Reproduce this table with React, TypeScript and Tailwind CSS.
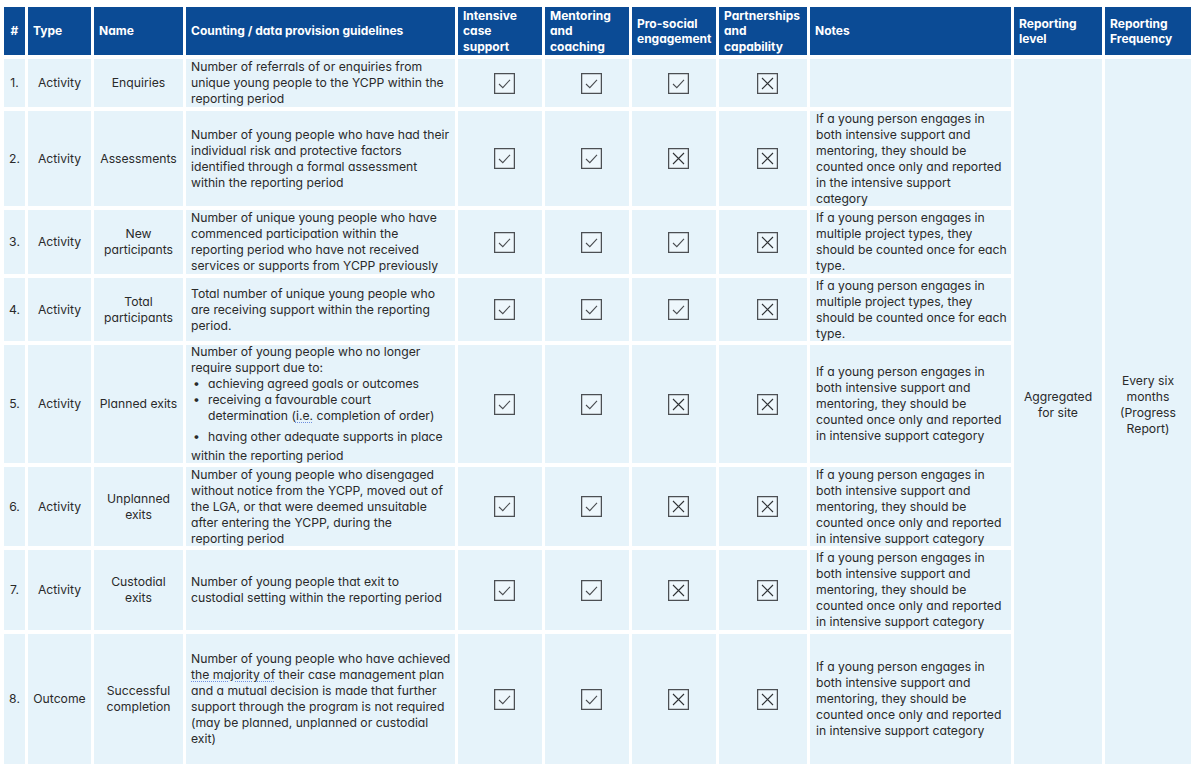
import React from "react";

type Row = {
  type: string;
  name: string[];
  guide: React.ReactNode;
  checks: boolean[];
  notes: string[];
};

const notesBoth = [
  "If a young person engages in",
  "both intensive support and",
  "mentoring, they should be",
  "counted once only and reported",
  "in intensive support category",
];

const notesMulti = [
  "If a young person engages in",
  "multiple project types, they",
  "should be counted once for each",
  "type.",
];

function Lines({ lines }: { lines: React.ReactNode[] }) {
  return (
    <>
      {lines.map((l, i) => (
        <React.Fragment key={i}>
          {i > 0 && <br />}
          {l}
        </React.Fragment>
      ))}
    </>
  );
}

const dotted = "underline decoration-dotted decoration-[#6f8fe0] underline-offset-2";

const rows: Row[] = [
  {
    type: "Activity",
    name: ["Enquiries"],
    guide: (
      <Lines
        lines={[
          "Number of referrals of or enquiries from",
          "unique young people to the YCPP within the",
          "reporting period",
        ]}
      />
    ),
    checks: [true, true, true, false],
    notes: [],
  },
  {
    type: "Activity",
    name: ["Assessments"],
    guide: (
      <Lines
        lines={[
          "Number of young people who have had their",
          "individual risk and protective factors",
          "identified through a formal assessment",
          "within the reporting period",
        ]}
      />
    ),
    checks: [true, true, false, false],
    notes: [
      "If a young person engages in",
      "both intensive support and",
      "mentoring, they should be",
      "counted once only and reported",
      "in the intensive support",
      "category",
    ],
  },
  {
    type: "Activity",
    name: ["New", "participants"],
    guide: (
      <Lines
        lines={[
          "Number of unique young people who have",
          "commenced participation within the",
          "reporting period who have not received",
          "services or supports from YCPP previously",
        ]}
      />
    ),
    checks: [true, true, true, false],
    notes: notesMulti,
  },
  {
    type: "Activity",
    name: ["Total", "participants"],
    guide: (
      <Lines
        lines={[
          "Total number of unique young people who",
          "are receiving support within the reporting",
          "period.",
        ]}
      />
    ),
    checks: [true, true, true, false],
    notes: notesMulti,
  },
  {
    type: "Activity",
    name: ["Planned exits"],
    guide: (
      <div>
        <p>
          Number of young people who no longer
          <br />
          require support due to:
        </p>
        <ul>
          <li className="flex">
            <span className="w-[17px] shrink-0 pl-[2px]">•</span>
            <span>achieving agreed goals or outcomes</span>
          </li>
          <li className="flex">
            <span className="w-[17px] shrink-0 pl-[2px]">•</span>
            <span>
              receiving a favourable court
              <br />
              determination (<span className={dotted}>i.e.</span> completion of order)
            </span>
          </li>
          <li className="mt-[5px] flex">
            <span className="w-[17px] shrink-0 pl-[2px]">•</span>
            <span>having other adequate supports in place</span>
          </li>
        </ul>
        <p className="mt-[3px]">within the reporting period</p>
      </div>
    ),
    checks: [true, true, false, false],
    notes: notesBoth,
  },
  {
    type: "Activity",
    name: ["Unplanned", "exits"],
    guide: (
      <Lines
        lines={[
          "Number of young people who disengaged",
          "without notice from the YCPP, moved out of",
          "the LGA, or that were deemed unsuitable",
          "after entering the YCPP, during the",
          "reporting period",
        ]}
      />
    ),
    checks: [true, true, false, false],
    notes: notesBoth,
  },
  {
    type: "Activity",
    name: ["Custodial", "exits"],
    guide: (
      <Lines
        lines={[
          "Number of young people that exit to",
          "custodial setting within the reporting period",
        ]}
      />
    ),
    checks: [true, true, false, false],
    notes: notesBoth,
  },
  {
    type: "Outcome",
    name: ["Successful", "completion"],
    guide: (
      <Lines
        lines={[
          "Number of young people who have achieved",
          <>
            <span className={dotted}>the majority of</span> their case management plan
          </>,
          "and a mutual decision is made that further",
          "support through the program is not required",
          "(may be planned, unplanned or custodial",
          "exit)",
        ]}
      />
    ),
    checks: [true, true, false, false],
    notes: notesBoth,
  },
];

function Box({ checked }: { checked: boolean }) {
  return (
    <svg width="21" height="21" viewBox="0 0 21 21" className="ml-[8px]">
      <rect x="0.6" y="0.6" width="19.8" height="19.8" fill="#eef7fc" stroke="#4c4f53" strokeWidth="1.3" />
      {checked ? (
        <path d="M5 11 L8.8 14.6 L16 6.8" fill="none" stroke="#4a4d51" strokeWidth="1.1" />
      ) : (
        <path d="M5 5 L16 16 M16 5 L5 16" fill="none" stroke="#2f3235" strokeWidth="1.1" />
      )}
    </svg>
  );
}

const head = "bg-[#0b4b95] text-white font-bold text-[12px] leading-[15.5px] flex items-center px-[5px]";
const cell = "bg-[#e6f3fa] flex items-center";

export default function App() {
  return (
    <div
      className="min-h-[774px] bg-white pl-[4px] pt-[7px] text-[12.2px] leading-[16px] text-[#2a2a2a] [font-feature-settings:'cv11'] font-['Inter','Noto_Sans',sans-serif]"
    >
      <div className="grid grid-cols-[21px_63px_89px_269px_84px_84px_84px_88px_201px_88px_86px] grid-rows-[48px_48px_95px_64px_63px_118px_79px_80px_130px] gap-x-[3px] gap-y-[4px] whitespace-nowrap">
        <div className={`${head} justify-center px-0`}>#</div>
        <div className={head}>Type</div>
        <div className={head}>Name</div>
        <div className={head}>Counting / data provision guidelines</div>
        <div className={head}>
          Intensive
          <br />
          case
          <br />
          support
        </div>
        <div className={head}>
          Mentoring
          <br />
          and
          <br />
          coaching
        </div>
        <div className={head}>
          Pro-social
          <br />
          engagement
        </div>
        <div className={head}>
          Partnerships
          <br />
          and
          <br />
          capability
        </div>
        <div className={head}>Notes</div>
        <div className={head}>
          Reporting
          <br />
          level
        </div>
        <div className={head}>
          Reporting
          <br />
          Frequency
        </div>

        {rows.map((r, i) => (
          <React.Fragment key={i}>
            <div className={`${cell} justify-center`}>{i + 1}.</div>
            <div className={`${cell} justify-center`}>{r.type}</div>
            <div className={`${cell} justify-center text-center`}>
              <Lines lines={r.name} />
            </div>
            <div className={`${cell} px-[5px]`}>
              <div>{r.guide}</div>
            </div>
            {r.checks.map((c, j) => (
              <div key={j} className={`${cell} justify-center`}>
                <Box checked={c} />
              </div>
            ))}
            <div className={`${cell} px-[6px]`}>
              <div>
                <Lines lines={r.notes} />
              </div>
            </div>
            {i === 0 && (
              <>
                <div className={`${cell} row-span-8 justify-center pb-[14px] text-center`}>
                  <div>
                    Aggregated
                    <br />
                    for site
                  </div>
                </div>
                <div className={`${cell} row-span-8 justify-center pb-[14px] text-center`}>
                  <div>
                    Every six
                    <br />
                    months
                    <br />
                    (Progress
                    <br />
                    Report)
                  </div>
                </div>
              </>
            )}
          </React.Fragment>
        ))}
      </div>
    </div>
  );
}
